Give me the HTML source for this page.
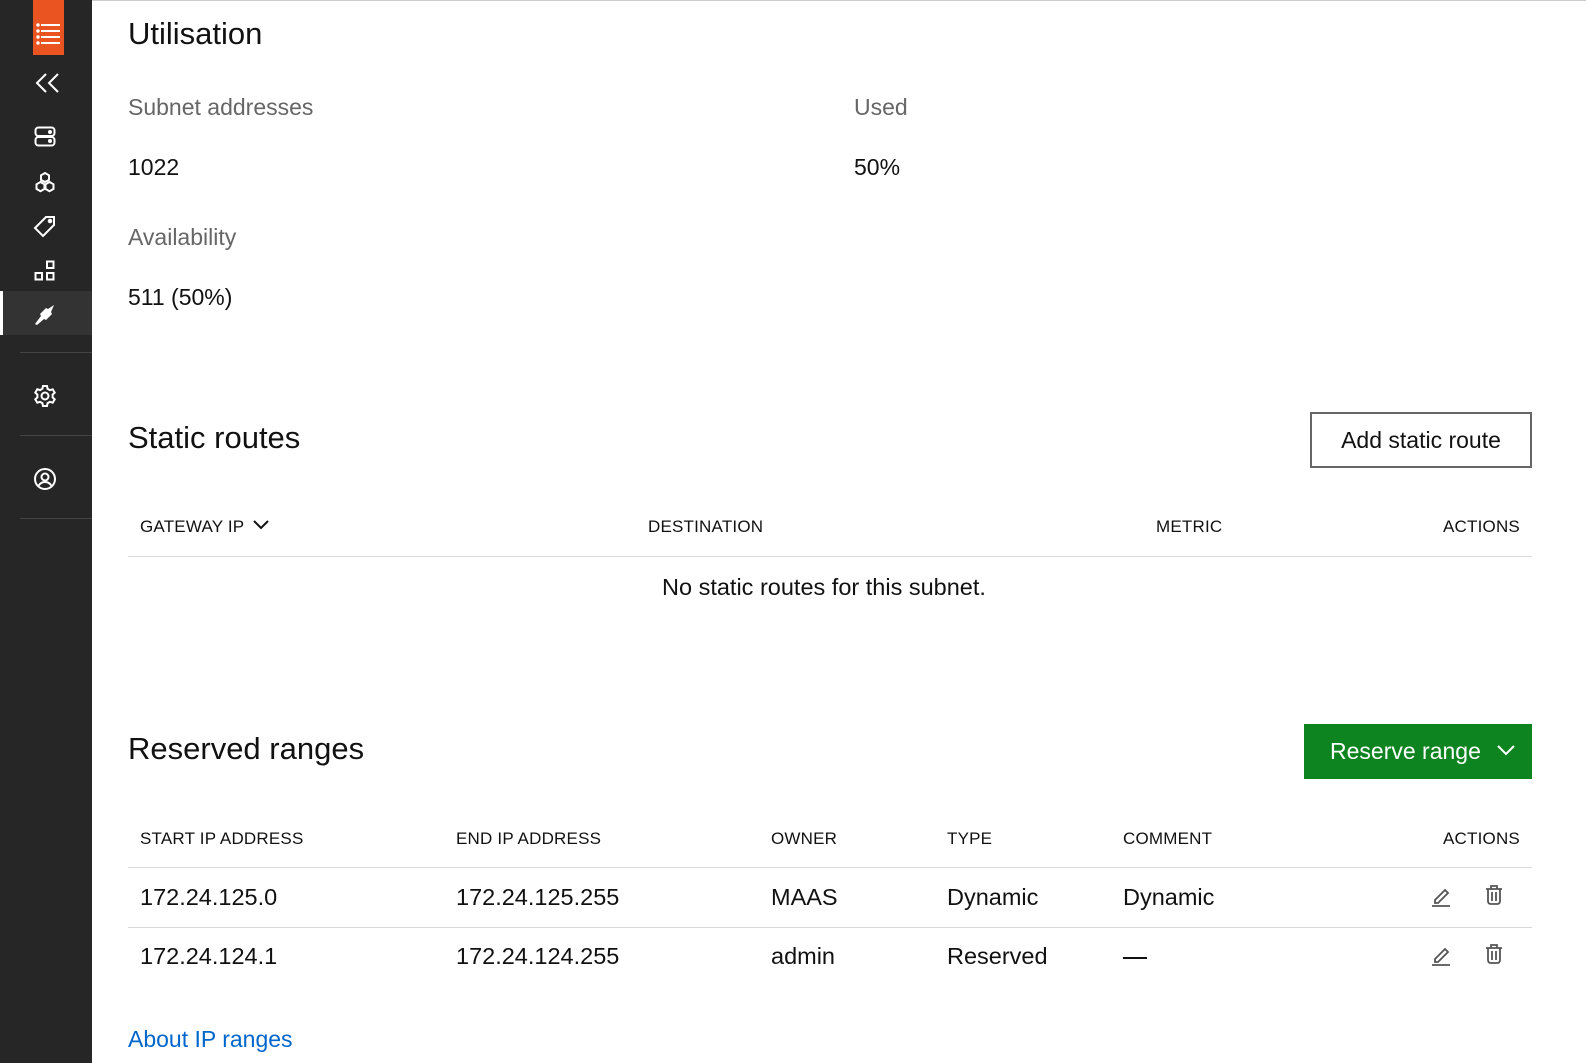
<!DOCTYPE html>
<html><head><style>
*{margin:0;padding:0;box-sizing:border-box}
body{width:1586px;height:1063px;overflow:hidden;background:#fff;font-family:"Liberation Sans",sans-serif;color:#111;position:relative}
.sb{position:absolute;left:0;top:0;width:92px;height:1063px;background:#262626}
.a{position:absolute;white-space:nowrap}
.h{font-size:31px;font-weight:300;color:#111}
.lab{font-size:23px;color:#666}
.val{font-size:23px}
.th{font-size:17px;color:#111;letter-spacing:.2px}
.td{font-size:23.5px}
.line{position:absolute;height:1px;background:#d9d9d9}
.ic{position:absolute}
</style></head><body>
<div style="position:absolute;left:92px;top:0;right:0;height:1px;background:#ccc"></div>
<div class="sb">
 <div style="position:absolute;left:33px;top:0;width:31px;height:55px;background:#e95420"></div>
 <svg class="ic" style="left:36px;top:22px" width="26" height="26" viewBox="0 0 26 26" fill="#fff"><circle cx="2" cy="3" r="1.7"/><circle cx="2" cy="9" r="1.7"/><circle cx="2" cy="15" r="1.7"/><circle cx="2" cy="21" r="1.7"/><rect x="5" y="2" width="19" height="2"/><rect x="5" y="8" width="19" height="2"/><rect x="5" y="14" width="19" height="2"/><rect x="5" y="20" width="19" height="2"/></svg>
 <svg class="ic" style="left:34px;top:72px" width="26" height="22" viewBox="0 0 26 22" fill="none" stroke="#fff" stroke-width="2"><path d="M12 2 3 11l9 9M24 2l-9 9 9 9"/></svg>
 <svg class="ic" style="left:34px;top:126px" width="22" height="22" viewBox="0 0 22 22" fill="none" stroke="#fff" stroke-width="2"><rect x="1.5" y="1.5" width="19" height="8.5" rx="3"/><rect x="1.5" y="11" width="19" height="8.5" rx="3"/><circle cx="16" cy="6" r="1" fill="#fff"/><circle cx="16" cy="15" r="1" fill="#fff"/></svg>
 <svg class="ic" style="left:34px;top:171px" width="22" height="22" viewBox="0 0 22 22" fill="none" stroke="#fff" stroke-width="2"><path d="M11 2l4 2.3v4.6L11 11 7 8.9V4.3zM6.5 11l4 2.3v4.6l-4 2.3-4-2.3v-4.6zM15.5 11l4 2.3v4.6l-4 2.3-4-2.3v-4.6z"/></svg>
 <svg class="ic" style="left:33px;top:215px" width="24" height="24" viewBox="0 0 24 24" fill="none" stroke="#fff" stroke-width="2"><path d="M13 2h8v8L10 21 2 13z"/><circle cx="17" cy="6" r="1.3" fill="#fff"/></svg>
 <svg class="ic" style="left:34px;top:260px" width="22" height="22" viewBox="0 0 22 22" fill="none" stroke="#fff" stroke-width="2"><rect x="13" y="1.5" width="6.5" height="6.5"/><rect x="1.5" y="13" width="6.5" height="6.5"/><rect x="13" y="13" width="6.5" height="6.5"/></svg>
 <div style="position:absolute;left:0;top:291px;width:92px;height:44px;background:#333"></div>
 <div style="position:absolute;left:0;top:291px;width:3px;height:44px;background:#fff"></div>
 <svg class="ic" style="left:33px;top:303px" width="24" height="24" viewBox="0 0 24 24"><path d="M21 2 15 6l-2-1-6 6 1 2-6 8 2 1 7-6 2 1 6-6-1-2z" fill="#fff"/></svg>
 <div style="position:absolute;left:20px;top:352px;width:72px;height:1px;background:#444"></div>
 <svg class="ic" style="left:33px;top:384px" width="24" height="24" viewBox="0 0 24 24" fill="none" stroke="#fff" stroke-width="2"><path d="M10 2h4l.6 2.8 2.4 1.4 2.7-.9 2 3.4-2.1 1.9v2.8l2.1 1.9-2 3.4-2.7-.9-2.4 1.4L14 22h-4l-.6-2.8-2.4-1.4-2.7.9-2-3.4 2.1-1.9v-2.8L2.3 8.6l2-3.4 2.7.9 2.4-1.4z"/><circle cx="12" cy="12" r="3.5"/></svg>
 <div style="position:absolute;left:20px;top:435px;width:72px;height:1px;background:#444"></div>
 <svg class="ic" style="left:33px;top:467px" width="24" height="24" viewBox="0 0 24 24" fill="none" stroke="#fff" stroke-width="2"><circle cx="12" cy="12" r="10"/><circle cx="12" cy="10" r="3.5"/><path d="M5.5 19c1.5-3 4-4 6.5-4s5 1 6.5 4"/></svg>
 <div style="position:absolute;left:20px;top:518px;width:72px;height:1px;background:#444"></div>
</div>

<div class="a h" style="left:128px;top:16px">Utilisation</div>
<div class="a lab" style="left:128px;top:94px">Subnet addresses</div>
<div class="a lab" style="left:854px;top:94px">Used</div>
<div class="a val" style="left:128px;top:154px">1022</div>
<div class="a val" style="left:854px;top:154px">50%</div>
<div class="a lab" style="left:128px;top:224px">Availability</div>
<div class="a val" style="left:128px;top:284px">511 (50%)</div>

<div class="a h" style="left:128px;top:420px">Static routes</div>
<div class="a" style="left:1310px;top:412px;width:222px;height:56px;border:2px solid #666;font-size:23px;text-align:center;line-height:52px">Add static route</div>
<div class="a th" style="left:140px;top:517px">GATEWAY IP</div>
<svg class="ic" style="left:252px;top:518px" width="18" height="14" viewBox="0 0 18 14" fill="none" stroke="#111" stroke-width="2"><path d="M2 3l7 7 7-7"/></svg>
<div class="a th" style="left:648px;top:517px">DESTINATION</div>
<div class="a th" style="left:1156px;top:517px">METRIC</div>
<div class="a th" style="left:1443px;top:517px">ACTIONS</div>
<div class="line" style="left:128px;top:556px;width:1404px"></div>
<div class="a td" style="left:662px;top:574px">No static routes for this subnet.</div>

<div class="a h" style="left:128px;top:731px">Reserved ranges</div>
<div class="a" style="left:1304px;top:724px;width:228px;height:55px;background:#0e8420;color:#fff;font-size:23px;line-height:55px;padding-left:26px">Reserve range</div>
<svg class="ic" style="left:1496px;top:743px" width="20" height="14" viewBox="0 0 20 14" fill="none" stroke="#fff" stroke-width="2"><path d="M2 3l8 8 8-8"/></svg>
<div class="a th" style="left:140px;top:829px">START IP ADDRESS</div>
<div class="a th" style="left:456px;top:829px">END IP ADDRESS</div>
<div class="a th" style="left:771px;top:829px">OWNER</div>
<div class="a th" style="left:947px;top:829px">TYPE</div>
<div class="a th" style="left:1123px;top:829px">COMMENT</div>
<div class="a th" style="left:1443px;top:829px">ACTIONS</div>
<div class="line" style="left:128px;top:867px;width:1404px"></div>
<div class="a td" style="left:140px;top:884px">172.24.125.0</div>
<div class="a td" style="left:456px;top:884px">172.24.125.255</div>
<div class="a td" style="left:771px;top:884px">MAAS</div>
<div class="a td" style="left:947px;top:884px">Dynamic</div>
<div class="a td" style="left:1123px;top:884px">Dynamic</div>
<div class="line" style="left:128px;top:927px;width:1404px"></div>
<div class="a td" style="left:140px;top:943px">172.24.124.1</div>
<div class="a td" style="left:456px;top:943px">172.24.124.255</div>
<div class="a td" style="left:771px;top:943px">admin</div>
<div class="a td" style="left:947px;top:943px">Reserved</div>
<div class="a" style="left:1123px;top:957px;width:24px;height:2px;background:#111"></div>

<svg class="ic" style="left:1431px;top:885px" width="22" height="22" viewBox="0 0 22 22" fill="none" stroke="#555" stroke-width="1.8"><path d="M4 15 14 5l3 3-10 10H4zM1 21h18"/></svg>
<svg class="ic" style="left:1484px;top:884px" width="20" height="22" viewBox="0 0 20 22" fill="none" stroke="#555" stroke-width="1.8"><path d="M2 5h16M7 5V2h6v3M4 5v12c0 2 1 3 3 3h6c2 0 3-1 3-3V5M8 8v9M12 8v9"/></svg>
<svg class="ic" style="left:1431px;top:944px" width="22" height="22" viewBox="0 0 22 22" fill="none" stroke="#555" stroke-width="1.8"><path d="M4 15 14 5l3 3-10 10H4zM1 21h18"/></svg>
<svg class="ic" style="left:1484px;top:943px" width="20" height="22" viewBox="0 0 20 22" fill="none" stroke="#555" stroke-width="1.8"><path d="M2 5h16M7 5V2h6v3M4 5v12c0 2 1 3 3 3h6c2 0 3-1 3-3V5M8 8v9M12 8v9"/></svg>

<div class="a" style="left:128px;top:1026px;font-size:23px;color:#0066cc">About IP ranges</div>
</body></html>
